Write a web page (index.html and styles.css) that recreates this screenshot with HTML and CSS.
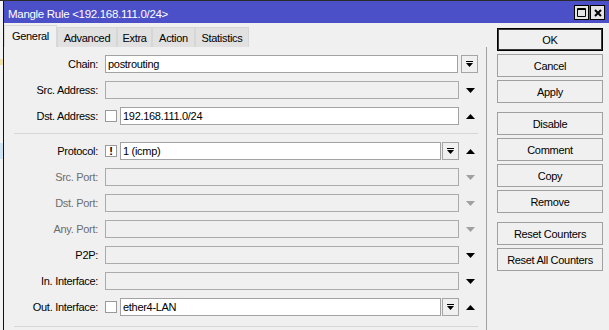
FILE: index.html
```html
<!DOCTYPE html>
<html>
<head>
<meta charset="utf-8">
<link rel="stylesheet" href="styles.css">
</head>
<body>
<div class="screen">
  <div class="backdrop">
    <div class="bd-gap1"></div>
    <div class="bd-yellow"></div>
    <div class="bd-gap2"></div>
    <div class="bd-blue"></div>
  </div>
  <div class="window">
    <div class="titlebar">
      <span class="title">Mangle Rule &lt;192.168.111.0/24&gt;</span>
      <div class="tb-btns">
        <span class="tb-btn"><svg width="9" height="9" viewBox="0 0 9 9"><path d="M0.5 0.5H8.5V8.5H0.5Z M0.5 1.5H8.5" fill="none" stroke="#000" stroke-width="1"/></svg></span>
        <span class="tb-btn"><svg width="8" height="8" viewBox="0 0 8 8"><path d="M1 1L7 7M7 1L1 7" stroke="#000" stroke-width="2"/></svg></span>
      </div>
    </div>
    <div class="content">
      <div class="main">
        <div class="tabs">
          <div class="tab active t-general">General</div>
          <div class="tab t-advanced">Advanced</div>
          <div class="tab t-extra">Extra</div>
          <div class="tab t-action">Action</div>
          <div class="tab t-stats">Statistics</div>
        </div>
        <div class="panel">
          <div class="row">
            <div class="label">Chain:</div>
            <div class="field wide">
              <div class="input">postrouting</div>
              <div class="ddbtn"><svg width="7" height="6" viewBox="0 0 7 6"><rect x="0" y="0" width="7" height="1"/><path d="M0 2H7L3.5 6Z"/></svg></div>
            </div>
          </div>
          <div class="row">
            <div class="label">Src. Address:</div>
            <div class="field"><div class="input disabled"></div></div>
            <div class="arrow"><svg width="9" height="5" viewBox="0 0 9 5"><path d="M0 0H9L4.5 5Z"/></svg></div>
          </div>
          <div class="row">
            <div class="label">Dst. Address:</div>
            <div class="field">
              <div class="check"></div>
              <div class="input">192.168.111.0/24</div>
            </div>
            <div class="arrow"><svg width="9" height="5" viewBox="0 0 9 5"><path d="M0 5H9L4.5 0Z"/></svg></div>
          </div>
          <div class="sep"></div>
          <div class="row">
            <div class="label">Protocol:</div>
            <div class="field">
              <div class="check bang">!</div>
              <div class="input">1 (icmp)</div>
              <div class="ddbtn tight"><svg width="7" height="6" viewBox="0 0 7 6"><rect x="0" y="0" width="7" height="1"/><path d="M0 2H7L3.5 6Z"/></svg></div>
            </div>
            <div class="arrow"><svg width="9" height="5" viewBox="0 0 9 5"><path d="M0 5H9L4.5 0Z"/></svg></div>
          </div>
          <div class="row">
            <div class="label dim">Src. Port:</div>
            <div class="field"><div class="input disabled"></div></div>
            <div class="arrow"><svg width="9" height="5" viewBox="0 0 9 5"><path d="M0 0H9L4.5 5Z" fill="#a0a0a0"/></svg></div>
          </div>
          <div class="row">
            <div class="label dim">Dst. Port:</div>
            <div class="field"><div class="input disabled"></div></div>
            <div class="arrow"><svg width="9" height="5" viewBox="0 0 9 5"><path d="M0 0H9L4.5 5Z" fill="#a0a0a0"/></svg></div>
          </div>
          <div class="row">
            <div class="label dim">Any. Port:</div>
            <div class="field"><div class="input disabled"></div></div>
            <div class="arrow"><svg width="9" height="5" viewBox="0 0 9 5"><path d="M0 0H9L4.5 5Z" fill="#a0a0a0"/></svg></div>
          </div>
          <div class="row">
            <div class="label">P2P:</div>
            <div class="field"><div class="input disabled"></div></div>
            <div class="arrow"><svg width="9" height="5" viewBox="0 0 9 5"><path d="M0 0H9L4.5 5Z"/></svg></div>
          </div>
          <div class="row">
            <div class="label">In. Interface:</div>
            <div class="field"><div class="input disabled"></div></div>
            <div class="arrow"><svg width="9" height="5" viewBox="0 0 9 5"><path d="M0 0H9L4.5 5Z"/></svg></div>
          </div>
          <div class="row">
            <div class="label">Out. Interface:</div>
            <div class="field">
              <div class="check"></div>
              <div class="input">ether4-LAN</div>
              <div class="ddbtn tight"><svg width="7" height="6" viewBox="0 0 7 6"><rect x="0" y="0" width="7" height="1"/><path d="M0 2H7L3.5 6Z"/></svg></div>
            </div>
            <div class="arrow"><svg width="9" height="5" viewBox="0 0 9 5"><path d="M0 5H9L4.5 0Z"/></svg></div>
          </div>
          <div class="sep last"></div>
        </div>
      </div>
      <div class="actions">
        <div class="btn default">OK</div>
        <div class="btn">Cancel</div>
        <div class="btn">Apply</div>
        <div class="btn group">Disable</div>
        <div class="btn">Comment</div>
        <div class="btn">Copy</div>
        <div class="btn">Remove</div>
        <div class="btn group">Reset Counters</div>
        <div class="btn">Reset All Counters</div>
      </div>
    </div>
  </div>
</div>
</body>
</html>
```

FILE: styles.css
```css
body {
  margin: 0;
  background: #f5f5f5;
  font-family: "Liberation Sans", Arial, sans-serif;
  font-size: 11px;
  letter-spacing: -0.3px;
  color: #000;
}

.screen {
  display: flex;
  width: 609px;
  height: 330px;
  box-sizing: border-box;
  border-top: 1px solid #2b2b2b;
  overflow: hidden;
}

.backdrop {
  width: 3px;
  flex: none;
  display: flex;
  flex-direction: column;
  background: #f3f3f3;
}
.bd-gap1 { height: 58px; }
.bd-yellow { height: 6px; background: #efe2a8; }
.bd-gap2 { height: 78px; }
.bd-blue { height: 16px; background: #cfe3f3; }

.window {
  flex: 1;
  display: flex;
  flex-direction: column;
  border-left: 1px solid #111;
  background: #f0f0f0;
  min-width: 0;
}

.titlebar {
  height: 22px;
  flex: none;
  background: #4c50c8;
  display: flex;
  align-items: flex-start;
  padding: 0 4px 0 4px;
  color: #fff;
}
.title {
  font-size: 11.5px;
  line-height: 14px;
  padding-top: 6px;
}
.tb-btns {
  margin-left: auto;
  margin-top: 4px;
  display: flex;
  gap: 1px;
}
.tb-btn {
  width: 15px;
  height: 15px;
  box-sizing: border-box;
  border: 1px solid #000;
  background: #e4e4e4;
  display: flex;
  align-items: center;
  justify-content: center;
}

.content {
  flex: 1;
  display: flex;
  min-height: 0;
}

.main {
  width: 483px;
  flex: none;
  display: flex;
  flex-direction: column;
}

.tabs {
  height: 24px;
  flex: none;
  display: flex;
  align-items: flex-end;
}
.tab {
  box-sizing: border-box;
  height: 20px;
  border: 1px solid #d6d6d6;
  border-bottom: none;
  background: #e1e1e1;
  display: flex;
  align-items: center;
  justify-content: center;
}
.tab.active {
  height: 22px;
  background: #f0f0f0;
  border-color: #d9d9d9;
  padding-bottom: 2px;
}
.t-general { width: 53px; }
.t-advanced { width: 60px; }
.t-extra { width: 35px; }
.t-action { width: 43px; }
.t-stats { width: 54px; }

.panel {
  flex: 1;
  border-right: 1px solid #a0a0a0;
  padding-top: 8px;
  display: flex;
  flex-direction: column;
  gap: 8px;
}

.row {
  display: flex;
  align-items: center;
  height: 18px;
}
.label {
  width: 101px;
  box-sizing: border-box;
  padding-right: 7px;
  text-align: right;
  flex: none;
}
.label.dim { color: #6d6d6d; }

.field {
  width: 354px;
  height: 18px;
  flex: none;
  display: flex;
  align-items: center;
}
.field.wide { width: 373px; }

.input {
  flex: 1;
  height: 18px;
  box-sizing: border-box;
  border: 1px solid #a2a2a2;
  background: #fff;
  padding-left: 2px;
  display: flex;
  align-items: center;
  white-space: nowrap;
}
.input.disabled {
  background: #f0f0f0;
  border-color: #ababab;
}

.ddbtn {
  width: 17px;
  height: 18px;
  box-sizing: border-box;
  margin-left: 3px;
  border: 1px solid #a5a5a5;
  background: #f0f0f0;
  display: flex;
  align-items: center;
  justify-content: center;
  flex: none;
}
.ddbtn.tight { margin-left: 1px; }

.check {
  width: 12px;
  height: 12px;
  box-sizing: border-box;
  border: 1px solid #9a9a9a;
  background: #fff;
  margin-right: 3px;
  flex: none;
  display: flex;
  align-items: center;
  justify-content: center;
}
.check.bang {
  font-weight: bold;
  font-size: 11px;
  line-height: 10px;
  letter-spacing: 0;
}

.arrow {
  width: 27px;
  box-sizing: border-box;
  padding-left: 7px;
  display: flex;
  align-items: center;
  flex: none;
}

.sep {
  height: 1px;
  background: #d7d7d7;
  margin: 0 8px 0 10px;
  flex: none;
}
.sep.last { margin-top: 2px; }

.actions {
  margin-left: 10px;
  width: 106px;
  flex: none;
  padding-top: 5px;
  display: flex;
  flex-direction: column;
  gap: 3px;
}
.btn {
  height: 23px;
  box-sizing: border-box;
  border: 1px solid #a0a0a0;
  background: #f0f0f0;
  display: flex;
  align-items: center;
  justify-content: center;
  white-space: nowrap;
}
.btn.default {
  border-color: #000;
  box-shadow: inset 0 0 0 1px #3a3a3a;
}
.btn.group { margin-top: 6px; }
```
